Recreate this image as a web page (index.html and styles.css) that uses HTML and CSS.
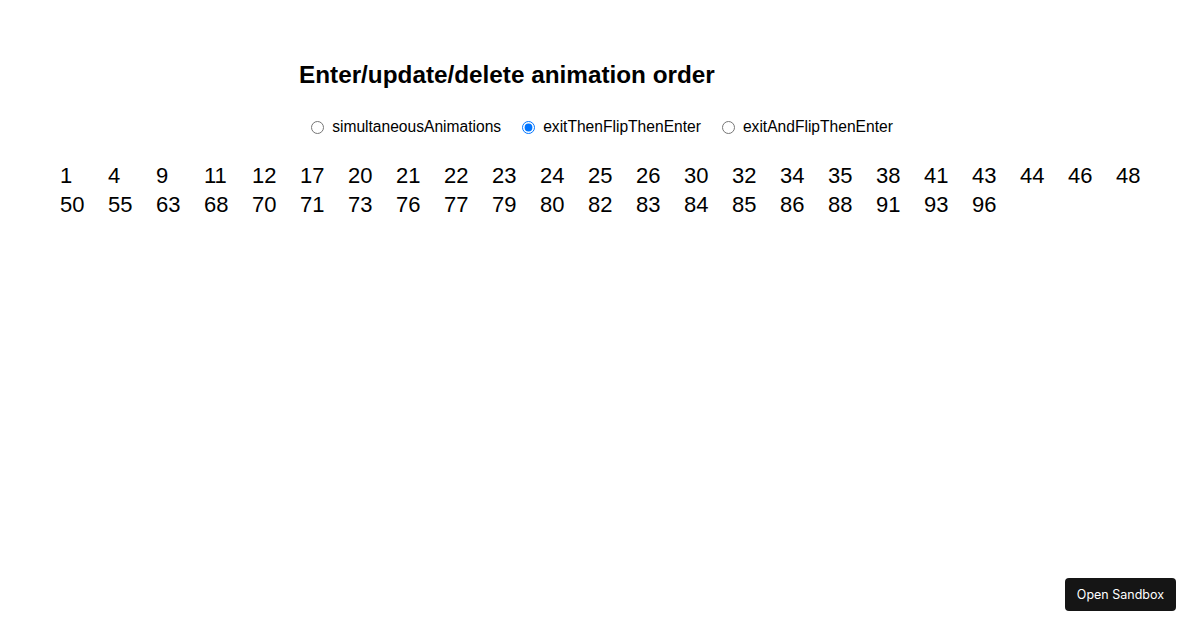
FILE: index.html
```html
<!DOCTYPE html>
<html>
<head>
<meta charset="utf-8">
<link rel="stylesheet" href="styles.css">
</head>
<body>
<div class="page">
  <div class="header">
    <h2 class="title">Enter/update/delete animation order</h2>
  </div>
  <div class="options">
    <label class="opt"><input type="radio" name="order"> simultaneousAnimations</label>
    <label class="opt"><input type="radio" name="order" checked> exitThenFlipThenEnter</label>
    <label class="opt"><input type="radio" name="order"> exitAndFlipThenEnter</label>
  </div>
  <ul class="list">
    <li>1</li><li>4</li><li>9</li><li>11</li><li>12</li><li>17</li><li>20</li><li>21</li><li>22</li><li>23</li><li>24</li><li>25</li><li>26</li><li>30</li><li>32</li><li>34</li><li>35</li><li>38</li><li>41</li><li>43</li><li>44</li><li>46</li><li>48</li>
    <li>50</li><li>55</li><li>63</li><li>68</li><li>70</li><li>71</li><li>73</li><li>76</li><li>77</li><li>79</li><li>80</li><li>82</li><li>83</li><li>84</li><li>85</li><li>86</li><li>88</li><li>91</li><li>93</li><li>96</li>
  </ul>
</div>
<a class="sandbox-btn">Open Sandbox</a>
</body>
</html>
```
FILE: styles.css
```css
html, body {
  margin: 0;
  padding: 0;
  background: #fff;
}
body {
  font-family: "Liberation Sans", Arial, sans-serif;
  color: #000;
  width: 1200px;
  height: 630px;
}
.page {
  padding-top: 61px;
}
.header {
  padding-left: 299px;
}
.title {
  margin: 0;
  font-size: 24.3px;
  font-weight: bold;
  line-height: 28px;
}
.options {
  display: flex;
  justify-content: center;
  gap: 21px;
  margin-top: 29px;
  padding-left: 4px;
  font-size: 15.6px;
}
.opt {
  display: flex;
  align-items: center;
}
.opt input {
  margin: 0 8px 0 0;
  width: 13px;
  height: 13px;
}
.list {
  list-style: none;
  margin: 25px 0 0 60px;
  padding: 0;
  width: 1120px;
  display: flex;
  flex-wrap: wrap;
}
.list li {
  width: 48px;
  height: 29px;
  font-size: 22px;
  line-height: 29px;
}
.sandbox-btn {
  position: fixed;
  right: 24px;
  bottom: 19px;
  background: #151515;
  color: #fff;
  font-size: 12.5px;
  border-radius: 4px;
  padding: 0 12px;
  height: 33px;
  line-height: 33px;
  font-family: "Inter", "Liberation Sans", sans-serif;
}
```
